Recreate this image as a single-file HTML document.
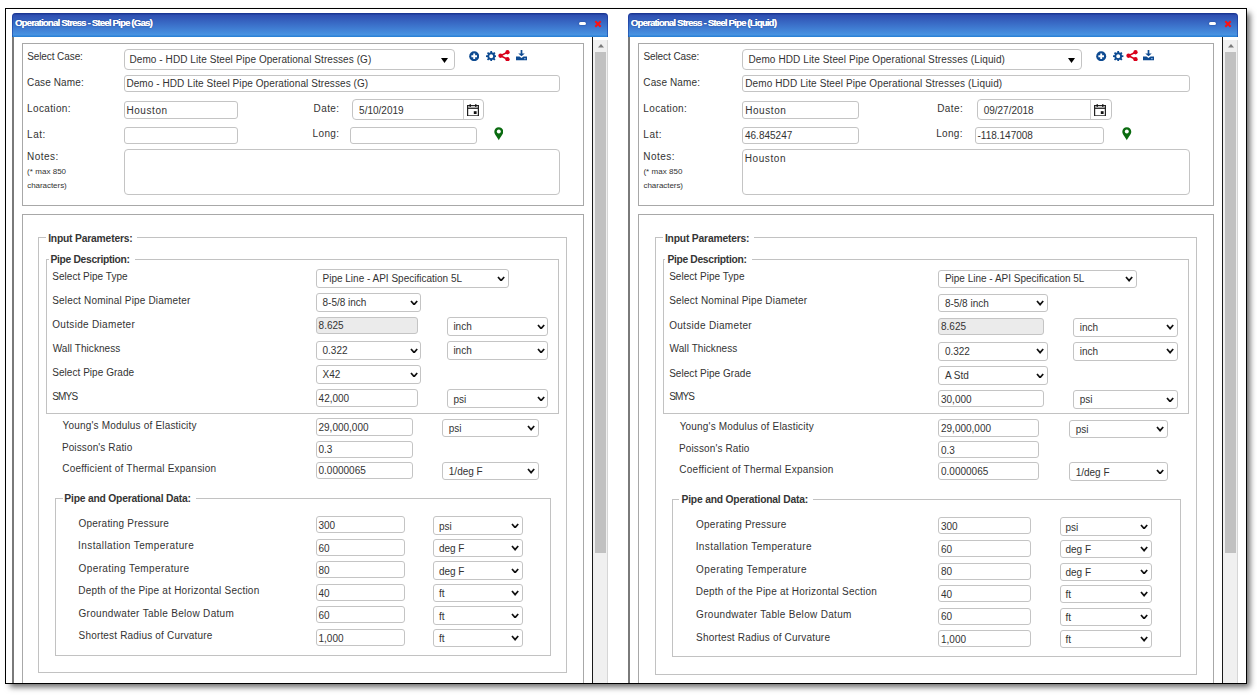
<!DOCTYPE html><html><head><meta charset="utf-8"><style>html,body{margin:0;padding:0;background:#fff;}body{width:1257px;height:695px;position:relative;overflow:hidden;font-family:"Liberation Sans", sans-serif;}</style></head><body>
<div style="position:absolute;left:5px;top:8px;width:1242px;height:676px;box-sizing:border-box;border:1px solid #000;box-shadow:4px 4px 6px -1px rgba(0,0,0,0.6);background:#fff;"></div>
<div style="position:absolute;left:0;top:0;width:1257px;height:683px;overflow:hidden;">
<div style="position:absolute;left:12px;top:13px;width:596px;height:24px;box-sizing:border-box;border-radius:4px 4px 0 0;background:linear-gradient(#15308c 0px,#2f50b2 2.5px,#4893e2 22px,#2c82d6 23px,#2c82d6 24px);box-shadow:inset 1px 0 0 rgba(10,40,140,0.45),inset -1px 0 0 rgba(10,40,140,0.45);"></div>
<div style="position:absolute;left:14.92px;top:16.91px;font-size:9.6px;line-height:11.03px;font-weight:700;color:#fff;white-space:pre;letter-spacing:-0.810px;text-shadow:0.25px 0 0 rgba(255,255,255,0.8),0 0 1.5px rgba(0,10,80,0.5);">Operational Stress - Steel Pipe (Gas)</div>
<div style="position:absolute;left:578.7px;top:22px;width:7.6px;height:3px;box-sizing:border-box;background:#fff;border-radius:1.5px;box-shadow:0 0 1.5px #0d2f7a;"></div>
<svg style="position:absolute;left:594px;top:19.7px" width="8" height="8"><path d="M1.3,1.3 L6.7,6.7 M6.7,1.3 L1.3,6.7" stroke="#ff1010" stroke-width="2"/></svg>
<div style="position:absolute;left:12px;top:37px;width:2px;height:647px;box-sizing:border-box;background:#7a7a7a;"></div>
<div style="position:absolute;left:592px;top:37px;width:1px;height:647px;box-sizing:border-box;background:#1a1a1a;"></div>
<div style="position:absolute;left:593px;top:39.5px;width:15px;height:644.5px;box-sizing:border-box;background:#f0f0f0;border-right:1px solid #d6d6d6;"></div>
<svg style="position:absolute;left:597.5px;top:43.6px" width="6" height="4"><path d="M0,3.6 L3,0 L6,3.6 Z" fill="#7a7a7a"/></svg>
<div style="position:absolute;left:594.5px;top:52px;width:11px;height:501px;box-sizing:border-box;background:#c1c1c1;"></div>
<div style="position:absolute;left:22px;top:43px;width:562px;height:163px;box-sizing:border-box;border:1px solid #a8a8a8;"></div>
<div style="position:absolute;left:27.15px;top:50.65px;font-size:10px;line-height:11.49px;font-weight:400;color:#333;white-space:pre;letter-spacing:-0.086px;">Select Case:</div>
<div style="position:absolute;left:27.1px;top:76.55px;font-size:10px;line-height:11.49px;font-weight:400;color:#333;white-space:pre;letter-spacing:0.111px;">Case Name:</div>
<div style="position:absolute;left:27.1px;top:102.95px;font-size:10px;line-height:11.49px;font-weight:400;color:#333;white-space:pre;letter-spacing:0.350px;">Location:</div>
<div style="position:absolute;left:27.1px;top:128.85px;font-size:10px;line-height:11.49px;font-weight:400;color:#333;white-space:pre;letter-spacing:0.533px;">Lat:</div>
<div style="position:absolute;left:27.1px;top:150.95px;font-size:10px;line-height:11.49px;font-weight:400;color:#333;white-space:pre;letter-spacing:0.460px;">Notes:</div>
<div style="position:absolute;left:27.12px;top:166.56px;font-size:8px;line-height:9.19px;font-weight:400;color:#333;white-space:pre;letter-spacing:0.031px;">(* max 850</div>
<div style="position:absolute;left:27.28px;top:180.56px;font-size:8px;line-height:9.19px;font-weight:400;color:#333;white-space:pre;letter-spacing:-0.054px;">characters)</div>
<div style="position:absolute;left:124px;top:49px;width:330.5px;height:20.5px;box-sizing:border-box;border:1px solid #c4c4c4;border-radius:4px;background:#fff;"></div>
<div style="position:absolute;left:129.5px;top:54.15px;font-size:10px;line-height:11.49px;font-weight:400;color:#333;white-space:pre;letter-spacing:0.078px;">Demo - HDD Lite Steel Pipe Operational Stresses (G)</div>
<svg style="position:absolute;left:440.5px;top:58px" width="7" height="5"><path d="M0,0 L7,0 L3.5,5 Z" fill="#000"/></svg>
<svg style="position:absolute;left:468.8px;top:50.8px" width="10.4" height="10.4" viewBox="0 0 20 20"><circle cx="10" cy="10" r="9.6" fill="#0d4a91"/><path d="M10,4.6 V15.4 M4.6,10 H15.4" stroke="#fff" stroke-width="3.6"/></svg>
<svg style="position:absolute;left:485.8px;top:50.8px" width="10.4" height="10.4" viewBox="0 0 20 20"><rect x="8.3" y="0" width="3.4" height="5" fill="#0d4a91" transform="rotate(0 10 10)"/><rect x="8.3" y="0" width="3.4" height="5" fill="#0d4a91" transform="rotate(45 10 10)"/><rect x="8.3" y="0" width="3.4" height="5" fill="#0d4a91" transform="rotate(90 10 10)"/><rect x="8.3" y="0" width="3.4" height="5" fill="#0d4a91" transform="rotate(135 10 10)"/><rect x="8.3" y="0" width="3.4" height="5" fill="#0d4a91" transform="rotate(180 10 10)"/><rect x="8.3" y="0" width="3.4" height="5" fill="#0d4a91" transform="rotate(225 10 10)"/><rect x="8.3" y="0" width="3.4" height="5" fill="#0d4a91" transform="rotate(270 10 10)"/><rect x="8.3" y="0" width="3.4" height="5" fill="#0d4a91" transform="rotate(315 10 10)"/><circle cx="10" cy="10" r="5.6" fill="none" stroke="#0d4a91" stroke-width="3.6"/></svg>
<svg style="position:absolute;left:498px;top:49.6px" width="12" height="11.5" viewBox="0 0 24 23"><path d="M19,4.5 L5,11.5 L19,18.5" fill="none" stroke="#d9001b" stroke-width="3.2"/><circle cx="19" cy="4.5" r="4.3" fill="#d9001b"/><circle cx="5" cy="11.5" r="4.3" fill="#d9001b"/><circle cx="19" cy="18.5" r="4.3" fill="#d9001b"/></svg>
<svg style="position:absolute;left:515.5px;top:50.4px" width="11" height="10.5" viewBox="0 0 22 21"><path d="M11,0 V8" stroke="#0d4a91" stroke-width="3.4"/><path d="M4.5,6.8 L17.5,6.8 L11,12.6 Z" fill="#0d4a91"/><path d="M0,13 H7 L11,16.2 L15,13 H22 V20.4 H0 Z" fill="#0d4a91"/><rect x="16" y="16" width="3.5" height="2.5" fill="#7aa3d6"/></svg>
<div style="position:absolute;left:124px;top:75px;width:436.2px;height:16.5px;box-sizing:border-box;border:1px solid #c4c4c4;border-radius:3px;background:#fff;"></div>
<div style="position:absolute;left:126.4px;top:77.95px;font-size:10px;line-height:11.49px;font-weight:400;color:#333;white-space:pre;letter-spacing:0.078px;">Demo - HDD Lite Steel Pipe Operational Stresses (G)</div>
<div style="position:absolute;left:124px;top:101.3px;width:113.5px;height:17.7px;box-sizing:border-box;border:1px solid #c4c4c4;border-radius:3px;background:#fff;"></div>
<div style="position:absolute;left:126.4px;top:104.85px;font-size:10px;line-height:11.49px;font-weight:400;color:#333;white-space:pre;letter-spacing:0.575px;">Houston</div>
<div style="position:absolute;left:313.6px;top:103.15px;font-size:10px;line-height:11.49px;font-weight:400;color:#333;white-space:pre;letter-spacing:0.400px;">Date:</div>
<div style="position:absolute;left:352.4px;top:99.2px;width:131.3px;height:20.6px;box-sizing:border-box;border:1px solid #c4c4c4;border-radius:4px;background:#fff;"></div>
<div style="position:absolute;left:462.6px;top:100px;width:1px;height:19px;box-sizing:border-box;background:#cfcfcf;"></div>
<div style="position:absolute;left:359.1px;top:104.65px;font-size:10px;line-height:11.49px;font-weight:400;color:#333;white-space:pre;">5/10/2019</div>
<svg style="position:absolute;left:467px;top:103.5px" width="12" height="12.5" viewBox="0 0 12 12.5"><rect x="0.6" y="1.6" width="10.8" height="10.3" fill="none" stroke="#222" stroke-width="1.2"/><rect x="0" y="3.6" width="12" height="1.3" fill="#222"/><rect x="2.5" y="0.3" width="1.5" height="2.5" fill="#111"/><rect x="8" y="0.3" width="1.5" height="2.5" fill="#111"/><rect x="6.8" y="7.2" width="2.8" height="2.8" fill="#111"/></svg>
<div style="position:absolute;left:124px;top:127px;width:113.5px;height:17px;box-sizing:border-box;border:1px solid #c4c4c4;border-radius:3px;background:#fff;"></div>
<div style="position:absolute;left:312.6px;top:128.45px;font-size:10px;line-height:11.49px;font-weight:400;color:#333;white-space:pre;letter-spacing:0.337px;">Long:</div>
<div style="position:absolute;left:350.4px;top:127px;width:126.2px;height:16.8px;box-sizing:border-box;border:1px solid #c4c4c4;border-radius:3px;background:#fff;"></div>
<svg style="position:absolute;left:493.7px;top:127.2px" width="9.6" height="13.4" viewBox="0 0 12 17"><path d="M6,0.3 C9.3,0.3 11.7,2.8 11.7,5.9 C11.7,9.3 8,12.5 6,16.8 C4,12.5 0.3,9.3 0.3,5.9 C0.3,2.8 2.7,0.3 6,0.3 Z" fill="#0a6b10"/><circle cx="6" cy="5.8" r="2.5" fill="#fff"/></svg>
<div style="position:absolute;left:124px;top:149.3px;width:436.2px;height:45.5px;box-sizing:border-box;border:1px solid #c4c4c4;border-radius:4px;background:#fff;"></div>
<div style="position:absolute;left:22px;top:214px;width:562px;height:486px;box-sizing:border-box;border:1px solid #a8a8a8;"></div>
<div style="position:absolute;left:38px;top:237px;width:529px;height:436px;box-sizing:border-box;border:1px solid #c2c2c2;"></div>
<div style="position:absolute;left:46.3px;top:236px;width:91.2px;height:2.2px;box-sizing:border-box;background:#fff;"></div>
<div style="position:absolute;left:48.13px;top:232.58px;font-size:10.3px;line-height:11.83px;font-weight:700;color:#353535;white-space:pre;letter-spacing:-0.185px;">Input Parameters:</div>
<div style="position:absolute;left:46.3px;top:259px;width:512.7px;height:154.5px;box-sizing:border-box;border:1px solid #c2c2c2;"></div>
<div style="position:absolute;left:48.7px;top:258px;width:86.3px;height:2.2px;box-sizing:border-box;background:#fff;"></div>
<div style="position:absolute;left:50.53px;top:254.08px;font-size:10.3px;line-height:11.83px;font-weight:700;color:#353535;white-space:pre;letter-spacing:-0.329px;">Pipe Description:</div>
<div style="position:absolute;left:55px;top:498px;width:496px;height:158px;box-sizing:border-box;border:1px solid #c2c2c2;"></div>
<div style="position:absolute;left:62.5px;top:497px;width:133.5px;height:2.2px;box-sizing:border-box;background:#fff;"></div>
<div style="position:absolute;left:64.33px;top:493.08px;font-size:10.3px;line-height:11.83px;font-weight:700;color:#353535;white-space:pre;letter-spacing:-0.201px;">Pipe and Operational Data:</div>
<div style="position:absolute;left:52.25px;top:271.05px;font-size:10px;line-height:11.49px;font-weight:400;color:#333;white-space:pre;letter-spacing:0.033px;">Select Pipe Type</div>
<div style="position:absolute;left:52.25px;top:294.85px;font-size:10px;line-height:11.49px;font-weight:400;color:#333;white-space:pre;letter-spacing:0.170px;">Select Nominal Pipe Diameter</div>
<div style="position:absolute;left:52.25px;top:319.05px;font-size:10px;line-height:11.49px;font-weight:400;color:#333;white-space:pre;letter-spacing:0.317px;">Outside Diameter</div>
<div style="position:absolute;left:52.7px;top:342.65px;font-size:10px;line-height:11.49px;font-weight:400;color:#333;white-space:pre;letter-spacing:0.073px;">Wall Thickness</div>
<div style="position:absolute;left:52.25px;top:366.85px;font-size:10px;line-height:11.49px;font-weight:400;color:#333;white-space:pre;letter-spacing:0.044px;">Select Pipe Grade</div>
<div style="position:absolute;left:52.25px;top:390.55px;font-size:10px;line-height:11.49px;font-weight:400;color:#333;white-space:pre;letter-spacing:-0.817px;">SMYS</div>
<div style="position:absolute;left:316px;top:269.4px;width:192.8px;height:18.2px;box-sizing:border-box;border:1px solid #c4c4c4;border-radius:3px;background:#fff;"></div>
<div style="position:absolute;left:322.5px;top:273.05px;font-size:10px;line-height:11.49px;font-weight:400;color:#333;white-space:pre;">Pipe Line - API Specification 5L</div>
<svg style="position:absolute;left:496.9px;top:275.6px" width="8.2" height="5.6"><polyline points="1,1 4.1,4.6 7.2,1" fill="none" stroke="#111" stroke-width="1.7" stroke-linejoin="miter"/></svg>
<div style="position:absolute;left:316px;top:293.4px;width:105.4px;height:18.2px;box-sizing:border-box;border:1px solid #c4c4c4;border-radius:3px;background:#fff;"></div>
<div style="position:absolute;left:322.5px;top:297.05px;font-size:10px;line-height:11.49px;font-weight:400;color:#333;white-space:pre;">8-5/8 inch</div>
<svg style="position:absolute;left:409.5px;top:299.6px" width="8.2" height="5.6"><polyline points="1,1 4.1,4.6 7.2,1" fill="none" stroke="#111" stroke-width="1.7" stroke-linejoin="miter"/></svg>
<div style="position:absolute;left:316px;top:317.3px;width:101.5px;height:16.7px;box-sizing:border-box;border:1px solid #c4c4c4;border-radius:3px;background:#ebebeb;"></div>
<div style="position:absolute;left:318.6px;top:320.35px;font-size:10px;line-height:11.49px;font-weight:400;color:#333;white-space:pre;">8.625</div>
<div style="position:absolute;left:446.9px;top:317.3px;width:101.6px;height:18.7px;box-sizing:border-box;border:1px solid #c4c4c4;border-radius:3px;background:#fff;"></div>
<div style="position:absolute;left:453.4px;top:321.2px;font-size:10px;line-height:11.49px;font-weight:400;color:#333;white-space:pre;">inch</div>
<svg style="position:absolute;left:536.6px;top:323.75px" width="8.2" height="5.6"><polyline points="1,1 4.1,4.6 7.2,1" fill="none" stroke="#111" stroke-width="1.7" stroke-linejoin="miter"/></svg>
<div style="position:absolute;left:316px;top:341.4px;width:105.4px;height:18.5px;box-sizing:border-box;border:1px solid #c4c4c4;border-radius:3px;background:#fff;"></div>
<div style="position:absolute;left:322.5px;top:345.2px;font-size:10px;line-height:11.49px;font-weight:400;color:#333;white-space:pre;">0.322</div>
<svg style="position:absolute;left:409.5px;top:347.75px" width="8.2" height="5.6"><polyline points="1,1 4.1,4.6 7.2,1" fill="none" stroke="#111" stroke-width="1.7" stroke-linejoin="miter"/></svg>
<div style="position:absolute;left:446.9px;top:341.4px;width:101.6px;height:18.6px;box-sizing:border-box;border:1px solid #c4c4c4;border-radius:3px;background:#fff;"></div>
<div style="position:absolute;left:453.4px;top:345.25px;font-size:10px;line-height:11.49px;font-weight:400;color:#333;white-space:pre;">inch</div>
<svg style="position:absolute;left:536.6px;top:347.8px" width="8.2" height="5.6"><polyline points="1,1 4.1,4.6 7.2,1" fill="none" stroke="#111" stroke-width="1.7" stroke-linejoin="miter"/></svg>
<div style="position:absolute;left:316px;top:365.3px;width:105.4px;height:18.9px;box-sizing:border-box;border:1px solid #c4c4c4;border-radius:3px;background:#fff;"></div>
<div style="position:absolute;left:322.5px;top:369.3px;font-size:10px;line-height:11.49px;font-weight:400;color:#333;white-space:pre;">X42</div>
<svg style="position:absolute;left:409.5px;top:371.85px" width="8.2" height="5.6"><polyline points="1,1 4.1,4.6 7.2,1" fill="none" stroke="#111" stroke-width="1.7" stroke-linejoin="miter"/></svg>
<div style="position:absolute;left:316px;top:389.4px;width:101.5px;height:17.2px;box-sizing:border-box;border:1px solid #c4c4c4;border-radius:3px;background:#fff;"></div>
<div style="position:absolute;left:318.6px;top:392.85px;font-size:10px;line-height:11.49px;font-weight:400;color:#333;white-space:pre;">42,000</div>
<div style="position:absolute;left:446.9px;top:389.4px;width:101.6px;height:18.6px;box-sizing:border-box;border:1px solid #c4c4c4;border-radius:3px;background:#fff;"></div>
<div style="position:absolute;left:453.4px;top:393.55px;font-size:10px;line-height:11.49px;font-weight:400;color:#333;white-space:pre;">psi</div>
<svg style="position:absolute;left:536.6px;top:395.8px" width="8.2" height="5.6"><polyline points="1,1 4.1,4.6 7.2,1" fill="none" stroke="#111" stroke-width="1.7" stroke-linejoin="miter"/></svg>
<div style="position:absolute;left:62.5px;top:420.25px;font-size:10px;line-height:11.49px;font-weight:400;color:#333;white-space:pre;letter-spacing:0.184px;">Young's Modulus of Elasticity</div>
<div style="position:absolute;left:61.9px;top:442.15px;font-size:10px;line-height:11.49px;font-weight:400;color:#333;white-space:pre;letter-spacing:0.121px;">Poisson's Ratio</div>
<div style="position:absolute;left:62.2px;top:462.65px;font-size:10px;line-height:11.49px;font-weight:400;color:#333;white-space:pre;letter-spacing:0.227px;">Coefficient of Thermal Expansion</div>
<div style="position:absolute;left:315.9px;top:418.2px;width:97.1px;height:17.6px;box-sizing:border-box;border:1px solid #c4c4c4;border-radius:3px;background:#fff;"></div>
<div style="position:absolute;left:318.5px;top:421.75px;font-size:10px;line-height:11.49px;font-weight:400;color:#333;white-space:pre;">29,000,000</div>
<div style="position:absolute;left:442.3px;top:419.2px;width:96.3px;height:18px;box-sizing:border-box;border:1px solid #c4c4c4;border-radius:3px;background:#fff;"></div>
<div style="position:absolute;left:448.8px;top:423.25px;font-size:10px;line-height:11.49px;font-weight:400;color:#333;white-space:pre;">psi</div>
<svg style="position:absolute;left:526.7px;top:425.3px" width="8.2" height="5.6"><polyline points="1,1 4.1,4.6 7.2,1" fill="none" stroke="#111" stroke-width="1.7" stroke-linejoin="miter"/></svg>
<div style="position:absolute;left:315.9px;top:440.6px;width:97.1px;height:17px;box-sizing:border-box;border:1px solid #c4c4c4;border-radius:3px;background:#fff;"></div>
<div style="position:absolute;left:318.5px;top:443.95px;font-size:10px;line-height:11.49px;font-weight:400;color:#333;white-space:pre;">0.3</div>
<div style="position:absolute;left:315.9px;top:461.5px;width:97.1px;height:17.5px;box-sizing:border-box;border:1px solid #c4c4c4;border-radius:3px;background:#fff;"></div>
<div style="position:absolute;left:318.5px;top:464.75px;font-size:10px;line-height:11.49px;font-weight:400;color:#333;white-space:pre;">0.0000065</div>
<div style="position:absolute;left:442.3px;top:461.5px;width:96.3px;height:18.7px;box-sizing:border-box;border:1px solid #c4c4c4;border-radius:3px;background:#fff;"></div>
<div style="position:absolute;left:448.8px;top:465.7px;font-size:10px;line-height:11.49px;font-weight:400;color:#333;white-space:pre;">1/deg F</div>
<svg style="position:absolute;left:526.7px;top:467.95px" width="8.2" height="5.6"><polyline points="1,1 4.1,4.6 7.2,1" fill="none" stroke="#111" stroke-width="1.7" stroke-linejoin="miter"/></svg>
<div style="position:absolute;left:78.55px;top:517.85px;font-size:10px;line-height:11.49px;font-weight:400;color:#333;white-space:pre;letter-spacing:0.209px;">Operating Pressure</div>
<div style="position:absolute;left:315.9px;top:516.4px;width:88.8px;height:17px;box-sizing:border-box;border:1px solid #c4c4c4;border-radius:3px;background:#fff;"></div>
<div style="position:absolute;left:318.5px;top:520.25px;font-size:10px;line-height:11.49px;font-weight:400;color:#333;white-space:pre;">300</div>
<div style="position:absolute;left:433.4px;top:516.4px;width:89.4px;height:18.2px;box-sizing:border-box;border:1px solid #c4c4c4;border-radius:3px;background:#fff;"></div>
<div style="position:absolute;left:438.9px;top:520.65px;font-size:10px;line-height:11.49px;font-weight:400;color:#333;white-space:pre;">psi</div>
<svg style="position:absolute;left:510.9px;top:522.6px" width="8.2" height="5.6"><polyline points="1,1 4.1,4.6 7.2,1" fill="none" stroke="#111" stroke-width="1.7" stroke-linejoin="miter"/></svg>
<div style="position:absolute;left:78.1px;top:540.31px;font-size:10px;line-height:11.49px;font-weight:400;color:#333;white-space:pre;letter-spacing:0.402px;">Installation Temperature</div>
<div style="position:absolute;left:315.9px;top:538.88px;width:88.8px;height:17px;box-sizing:border-box;border:1px solid #c4c4c4;border-radius:3px;background:#fff;"></div>
<div style="position:absolute;left:318.5px;top:542.73px;font-size:10px;line-height:11.49px;font-weight:400;color:#333;white-space:pre;">60</div>
<div style="position:absolute;left:433.4px;top:538.88px;width:89.4px;height:18.2px;box-sizing:border-box;border:1px solid #c4c4c4;border-radius:3px;background:#fff;"></div>
<div style="position:absolute;left:438.9px;top:543.13px;font-size:10px;line-height:11.49px;font-weight:400;color:#333;white-space:pre;">deg F</div>
<svg style="position:absolute;left:510.9px;top:545.08px" width="8.2" height="5.6"><polyline points="1,1 4.1,4.6 7.2,1" fill="none" stroke="#111" stroke-width="1.7" stroke-linejoin="miter"/></svg>
<div style="position:absolute;left:78.55px;top:562.77px;font-size:10px;line-height:11.49px;font-weight:400;color:#333;white-space:pre;letter-spacing:0.395px;">Operating Temperature</div>
<div style="position:absolute;left:315.9px;top:561.36px;width:88.8px;height:17px;box-sizing:border-box;border:1px solid #c4c4c4;border-radius:3px;background:#fff;"></div>
<div style="position:absolute;left:318.5px;top:565.21px;font-size:10px;line-height:11.49px;font-weight:400;color:#333;white-space:pre;">80</div>
<div style="position:absolute;left:433.4px;top:561.36px;width:89.4px;height:18.2px;box-sizing:border-box;border:1px solid #c4c4c4;border-radius:3px;background:#fff;"></div>
<div style="position:absolute;left:438.9px;top:565.61px;font-size:10px;line-height:11.49px;font-weight:400;color:#333;white-space:pre;">deg F</div>
<svg style="position:absolute;left:510.9px;top:567.56px" width="8.2" height="5.6"><polyline points="1,1 4.1,4.6 7.2,1" fill="none" stroke="#111" stroke-width="1.7" stroke-linejoin="miter"/></svg>
<div style="position:absolute;left:78.2px;top:585.23px;font-size:10px;line-height:11.49px;font-weight:400;color:#333;white-space:pre;letter-spacing:0.229px;">Depth of the Pipe at Horizontal Section</div>
<div style="position:absolute;left:315.9px;top:583.84px;width:88.8px;height:17px;box-sizing:border-box;border:1px solid #c4c4c4;border-radius:3px;background:#fff;"></div>
<div style="position:absolute;left:318.5px;top:587.69px;font-size:10px;line-height:11.49px;font-weight:400;color:#333;white-space:pre;">40</div>
<div style="position:absolute;left:433.4px;top:583.84px;width:89.4px;height:18.2px;box-sizing:border-box;border:1px solid #c4c4c4;border-radius:3px;background:#fff;"></div>
<div style="position:absolute;left:438.9px;top:588.09px;font-size:10px;line-height:11.49px;font-weight:400;color:#333;white-space:pre;">ft</div>
<svg style="position:absolute;left:510.9px;top:590.04px" width="8.2" height="5.6"><polyline points="1,1 4.1,4.6 7.2,1" fill="none" stroke="#111" stroke-width="1.7" stroke-linejoin="miter"/></svg>
<div style="position:absolute;left:78.5px;top:607.69px;font-size:10px;line-height:11.49px;font-weight:400;color:#333;white-space:pre;letter-spacing:0.312px;">Groundwater Table Below Datum</div>
<div style="position:absolute;left:315.9px;top:606.32px;width:88.8px;height:17px;box-sizing:border-box;border:1px solid #c4c4c4;border-radius:3px;background:#fff;"></div>
<div style="position:absolute;left:318.5px;top:610.17px;font-size:10px;line-height:11.49px;font-weight:400;color:#333;white-space:pre;">60</div>
<div style="position:absolute;left:433.4px;top:606.32px;width:89.4px;height:18.2px;box-sizing:border-box;border:1px solid #c4c4c4;border-radius:3px;background:#fff;"></div>
<div style="position:absolute;left:438.9px;top:610.57px;font-size:10px;line-height:11.49px;font-weight:400;color:#333;white-space:pre;">ft</div>
<svg style="position:absolute;left:510.9px;top:612.52px" width="8.2" height="5.6"><polyline points="1,1 4.1,4.6 7.2,1" fill="none" stroke="#111" stroke-width="1.7" stroke-linejoin="miter"/></svg>
<div style="position:absolute;left:78.55px;top:630.15px;font-size:10px;line-height:11.49px;font-weight:400;color:#333;white-space:pre;letter-spacing:0.181px;">Shortest Radius of Curvature</div>
<div style="position:absolute;left:315.9px;top:628.8px;width:88.8px;height:17px;box-sizing:border-box;border:1px solid #c4c4c4;border-radius:3px;background:#fff;"></div>
<div style="position:absolute;left:318.5px;top:632.65px;font-size:10px;line-height:11.49px;font-weight:400;color:#333;white-space:pre;">1,000</div>
<div style="position:absolute;left:433.4px;top:628.8px;width:89.4px;height:18.2px;box-sizing:border-box;border:1px solid #c4c4c4;border-radius:3px;background:#fff;"></div>
<div style="position:absolute;left:438.9px;top:633.05px;font-size:10px;line-height:11.49px;font-weight:400;color:#333;white-space:pre;">ft</div>
<svg style="position:absolute;left:510.9px;top:635px" width="8.2" height="5.6"><polyline points="1,1 4.1,4.6 7.2,1" fill="none" stroke="#111" stroke-width="1.7" stroke-linejoin="miter"/></svg>
<div style="position:absolute;left:627.87px;top:13px;width:610.33px;height:24px;box-sizing:border-box;border-radius:4px 4px 0 0;background:linear-gradient(#15308c 0px,#2f50b2 2.5px,#4893e2 22px,#2c82d6 23px,#2c82d6 24px);box-shadow:inset 1px 0 0 rgba(10,40,140,0.45),inset -1px 0 0 rgba(10,40,140,0.45);"></div>
<div style="position:absolute;left:630.78px;top:16.91px;font-size:9.6px;line-height:11.03px;font-weight:700;color:#fff;white-space:pre;letter-spacing:-0.806px;text-shadow:0.25px 0 0 rgba(255,255,255,0.8),0 0 1.5px rgba(0,10,80,0.5);">Operational Stress - Steel Pipe (Liquid)</div>
<div style="position:absolute;left:1208.9px;top:22px;width:7.6px;height:3px;box-sizing:border-box;background:#fff;border-radius:1.5px;box-shadow:0 0 1.5px #0d2f7a;"></div>
<svg style="position:absolute;left:1224.2px;top:19.7px" width="8" height="8"><path d="M1.3,1.3 L6.7,6.7 M6.7,1.3 L1.3,6.7" stroke="#ff1010" stroke-width="2"/></svg>
<div style="position:absolute;left:627.87px;top:37px;width:2px;height:647px;box-sizing:border-box;background:#7a7a7a;"></div>
<div style="position:absolute;left:1222px;top:37px;width:1px;height:647px;box-sizing:border-box;background:#1a1a1a;"></div>
<div style="position:absolute;left:1223px;top:39.5px;width:15px;height:644.5px;box-sizing:border-box;background:#f0f0f0;border-right:1px solid #d6d6d6;"></div>
<svg style="position:absolute;left:1227.6px;top:43.6px" width="6" height="4"><path d="M0,3.6 L3,0 L6,3.6 Z" fill="#7a7a7a"/></svg>
<div style="position:absolute;left:1224.5px;top:52px;width:11px;height:501px;box-sizing:border-box;background:#c1c1c1;"></div>
<div style="position:absolute;left:638.12px;top:43px;width:576.32px;height:163.26px;box-sizing:border-box;border:1px solid #a8a8a8;"></div>
<div style="position:absolute;left:643.41px;top:50.65px;font-size:10px;line-height:11.49px;font-weight:400;color:#333;white-space:pre;letter-spacing:-0.086px;">Select Case:</div>
<div style="position:absolute;left:643.36px;top:76.55px;font-size:10px;line-height:11.49px;font-weight:400;color:#333;white-space:pre;letter-spacing:0.111px;">Case Name:</div>
<div style="position:absolute;left:643.37px;top:102.95px;font-size:10px;line-height:11.49px;font-weight:400;color:#333;white-space:pre;letter-spacing:0.350px;">Location:</div>
<div style="position:absolute;left:643.37px;top:128.85px;font-size:10px;line-height:11.49px;font-weight:400;color:#333;white-space:pre;letter-spacing:0.533px;">Lat:</div>
<div style="position:absolute;left:643.37px;top:150.95px;font-size:10px;line-height:11.49px;font-weight:400;color:#333;white-space:pre;letter-spacing:0.460px;">Notes:</div>
<div style="position:absolute;left:643.38px;top:166.56px;font-size:8px;line-height:9.19px;font-weight:400;color:#333;white-space:pre;letter-spacing:0.031px;">(* max 850</div>
<div style="position:absolute;left:643.54px;top:180.56px;font-size:8px;line-height:9.19px;font-weight:400;color:#333;white-space:pre;letter-spacing:-0.054px;">characters)</div>
<div style="position:absolute;left:742.4px;top:49px;width:339.24px;height:20.5px;box-sizing:border-box;border:1px solid #c4c4c4;border-radius:4px;background:#fff;"></div>
<div style="position:absolute;left:748.38px;top:54.15px;font-size:10px;line-height:11.49px;font-weight:400;color:#333;white-space:pre;letter-spacing:0.111px;">Demo HDD Lite Steel Pipe Operational Stresses (Liquid)</div>
<svg style="position:absolute;left:1067.64px;top:58px" width="7" height="5"><path d="M0,0 L7,0 L3.5,5 Z" fill="#000"/></svg>
<svg style="position:absolute;left:1096.44px;top:50.8px" width="10.4" height="10.4" viewBox="0 0 20 20"><circle cx="10" cy="10" r="9.6" fill="#0d4a91"/><path d="M10,4.6 V15.4 M4.6,10 H15.4" stroke="#fff" stroke-width="3.6"/></svg>
<svg style="position:absolute;left:1113.44px;top:50.8px" width="10.4" height="10.4" viewBox="0 0 20 20"><rect x="8.3" y="0" width="3.4" height="5" fill="#0d4a91" transform="rotate(0 10 10)"/><rect x="8.3" y="0" width="3.4" height="5" fill="#0d4a91" transform="rotate(45 10 10)"/><rect x="8.3" y="0" width="3.4" height="5" fill="#0d4a91" transform="rotate(90 10 10)"/><rect x="8.3" y="0" width="3.4" height="5" fill="#0d4a91" transform="rotate(135 10 10)"/><rect x="8.3" y="0" width="3.4" height="5" fill="#0d4a91" transform="rotate(180 10 10)"/><rect x="8.3" y="0" width="3.4" height="5" fill="#0d4a91" transform="rotate(225 10 10)"/><rect x="8.3" y="0" width="3.4" height="5" fill="#0d4a91" transform="rotate(270 10 10)"/><rect x="8.3" y="0" width="3.4" height="5" fill="#0d4a91" transform="rotate(315 10 10)"/><circle cx="10" cy="10" r="5.6" fill="none" stroke="#0d4a91" stroke-width="3.6"/></svg>
<svg style="position:absolute;left:1125.64px;top:49.6px" width="12" height="11.5" viewBox="0 0 24 23"><path d="M19,4.5 L5,11.5 L19,18.5" fill="none" stroke="#d9001b" stroke-width="3.2"/><circle cx="19" cy="4.5" r="4.3" fill="#d9001b"/><circle cx="5" cy="11.5" r="4.3" fill="#d9001b"/><circle cx="19" cy="18.5" r="4.3" fill="#d9001b"/></svg>
<svg style="position:absolute;left:1143.14px;top:50.4px" width="11" height="10.5" viewBox="0 0 22 21"><path d="M11,0 V8" stroke="#0d4a91" stroke-width="3.4"/><path d="M4.5,6.8 L17.5,6.8 L11,12.6 Z" fill="#0d4a91"/><path d="M0,13 H7 L11,16.2 L15,13 H22 V20.4 H0 Z" fill="#0d4a91"/><rect x="16" y="16" width="3.5" height="2.5" fill="#7aa3d6"/></svg>
<div style="position:absolute;left:742.4px;top:75px;width:447.63px;height:16.5px;box-sizing:border-box;border:1px solid #c4c4c4;border-radius:3px;background:#fff;"></div>
<div style="position:absolute;left:745.2px;top:77.95px;font-size:10px;line-height:11.49px;font-weight:400;color:#333;white-space:pre;letter-spacing:0.119px;">Demo HDD Lite Steel Pipe Operational Stresses (Liquid)</div>
<div style="position:absolute;left:742.4px;top:101.3px;width:116.71px;height:17.7px;box-sizing:border-box;border:1px solid #c4c4c4;border-radius:3px;background:#fff;"></div>
<div style="position:absolute;left:745.2px;top:104.85px;font-size:10px;line-height:11.49px;font-weight:400;color:#333;white-space:pre;letter-spacing:0.575px;">Houston</div>
<div style="position:absolute;left:937.17px;top:103.15px;font-size:10px;line-height:11.49px;font-weight:400;color:#333;white-space:pre;letter-spacing:0.400px;">Date:</div>
<div style="position:absolute;left:976.94px;top:99.2px;width:134.65px;height:20.6px;box-sizing:border-box;border:1px solid #c4c4c4;border-radius:4px;background:#fff;"></div>
<div style="position:absolute;left:1089.95px;top:100px;width:1px;height:19px;box-sizing:border-box;background:#cfcfcf;"></div>
<div style="position:absolute;left:983.64px;top:104.65px;font-size:10px;line-height:11.49px;font-weight:400;color:#333;white-space:pre;">09/27/2018</div>
<svg style="position:absolute;left:1094.46px;top:103.5px" width="12" height="12.5" viewBox="0 0 12 12.5"><rect x="0.6" y="1.6" width="10.8" height="10.3" fill="none" stroke="#222" stroke-width="1.2"/><rect x="0" y="3.6" width="12" height="1.3" fill="#222"/><rect x="2.5" y="0.3" width="1.5" height="2.5" fill="#111"/><rect x="8" y="0.3" width="1.5" height="2.5" fill="#111"/><rect x="6.8" y="7.2" width="2.8" height="2.8" fill="#111"/></svg>
<div style="position:absolute;left:742.4px;top:127px;width:116.71px;height:17px;box-sizing:border-box;border:1px solid #c4c4c4;border-radius:3px;background:#fff;"></div>
<div style="position:absolute;left:745px;top:130.35px;font-size:10px;line-height:11.49px;font-weight:400;color:#333;white-space:pre;">46.845247</div>
<div style="position:absolute;left:936.15px;top:128.45px;font-size:10px;line-height:11.49px;font-weight:400;color:#333;white-space:pre;letter-spacing:0.337px;">Long:</div>
<div style="position:absolute;left:974.89px;top:127px;width:129.42px;height:16.8px;box-sizing:border-box;border:1px solid #c4c4c4;border-radius:3px;background:#fff;"></div>
<div style="position:absolute;left:977.49px;top:130.35px;font-size:10px;line-height:11.49px;font-weight:400;color:#333;white-space:pre;">-118.147008</div>
<svg style="position:absolute;left:1121.96px;top:127.2px" width="9.6" height="13.4" viewBox="0 0 12 17"><path d="M6,0.3 C9.3,0.3 11.7,2.8 11.7,5.9 C11.7,9.3 8,12.5 6,16.8 C4,12.5 0.3,9.3 0.3,5.9 C0.3,2.8 2.7,0.3 6,0.3 Z" fill="#0a6b10"/><circle cx="6" cy="5.8" r="2.5" fill="#fff"/></svg>
<div style="position:absolute;left:742.4px;top:149.3px;width:447.63px;height:45.5px;box-sizing:border-box;border:1px solid #c4c4c4;border-radius:4px;background:#fff;"></div>
<div style="position:absolute;left:744.8px;top:152.55px;font-size:10px;line-height:11.49px;font-weight:400;color:#333;white-space:pre;letter-spacing:0.575px;">Houston</div>
<div style="position:absolute;left:638.12px;top:214.28px;width:576.32px;height:485.72px;box-sizing:border-box;border:1px solid #a8a8a8;"></div>
<div style="position:absolute;left:654.53px;top:237.33px;width:542.48px;height:437.8px;box-sizing:border-box;border:1px solid #c2c2c2;"></div>
<div style="position:absolute;left:662.83px;top:236.33px;width:91.2px;height:2.2px;box-sizing:border-box;background:#fff;"></div>
<div style="position:absolute;left:664.93px;top:232.91px;font-size:10.3px;line-height:11.83px;font-weight:700;color:#353535;white-space:pre;letter-spacing:-0.185px;">Input Parameters:</div>
<div style="position:absolute;left:663.04px;top:259.39px;width:525.76px;height:154.89px;box-sizing:border-box;border:1px solid #c2c2c2;"></div>
<div style="position:absolute;left:665.44px;top:258.39px;width:86.3px;height:2.2px;box-sizing:border-box;background:#fff;"></div>
<div style="position:absolute;left:667.4px;top:254.47px;font-size:10.3px;line-height:11.83px;font-weight:700;color:#353535;white-space:pre;letter-spacing:-0.329px;">Pipe Description:</div>
<div style="position:absolute;left:671.96px;top:498.99px;width:508.64px;height:158.4px;box-sizing:border-box;border:1px solid #c2c2c2;"></div>
<div style="position:absolute;left:679.46px;top:497.99px;width:133.5px;height:2.2px;box-sizing:border-box;background:#fff;"></div>
<div style="position:absolute;left:681.55px;top:494.07px;font-size:10.3px;line-height:11.83px;font-weight:700;color:#353535;white-space:pre;letter-spacing:-0.201px;">Pipe and Operational Data:</div>
<div style="position:absolute;left:669.15px;top:271.49px;font-size:10px;line-height:11.49px;font-weight:400;color:#333;white-space:pre;letter-spacing:0.033px;">Select Pipe Type</div>
<div style="position:absolute;left:669.15px;top:295.35px;font-size:10px;line-height:11.49px;font-weight:400;color:#333;white-space:pre;letter-spacing:0.170px;">Select Nominal Pipe Diameter</div>
<div style="position:absolute;left:669.15px;top:319.61px;font-size:10px;line-height:11.49px;font-weight:400;color:#333;white-space:pre;letter-spacing:0.317px;">Outside Diameter</div>
<div style="position:absolute;left:669.6px;top:343.27px;font-size:10px;line-height:11.49px;font-weight:400;color:#333;white-space:pre;letter-spacing:0.073px;">Wall Thickness</div>
<div style="position:absolute;left:669.15px;top:367.53px;font-size:10px;line-height:11.49px;font-weight:400;color:#333;white-space:pre;letter-spacing:0.044px;">Select Pipe Grade</div>
<div style="position:absolute;left:669.15px;top:391.29px;font-size:10px;line-height:11.49px;font-weight:400;color:#333;white-space:pre;letter-spacing:-0.817px;">SMYS</div>
<div style="position:absolute;left:938.4px;top:269.81px;width:198.92px;height:18.25px;box-sizing:border-box;border:1px solid #c4c4c4;border-radius:3px;background:#fff;"></div>
<div style="position:absolute;left:944.9px;top:273.49px;font-size:10px;line-height:11.49px;font-weight:400;color:#333;white-space:pre;">Pipe Line - API Specification 5L</div>
<svg style="position:absolute;left:1125.42px;top:276.04px" width="8.2" height="5.6"><polyline points="1,1 4.1,4.6 7.2,1" fill="none" stroke="#111" stroke-width="1.7" stroke-linejoin="miter"/></svg>
<div style="position:absolute;left:938.4px;top:293.88px;width:109.3px;height:18.25px;box-sizing:border-box;border:1px solid #c4c4c4;border-radius:3px;background:#fff;"></div>
<div style="position:absolute;left:944.9px;top:297.55px;font-size:10px;line-height:11.49px;font-weight:400;color:#333;white-space:pre;">8-5/8 inch</div>
<svg style="position:absolute;left:1035.8px;top:300.1px" width="8.2" height="5.6"><polyline points="1,1 4.1,4.6 7.2,1" fill="none" stroke="#111" stroke-width="1.7" stroke-linejoin="miter"/></svg>
<div style="position:absolute;left:938.4px;top:317.84px;width:105.3px;height:16.74px;box-sizing:border-box;border:1px solid #c4c4c4;border-radius:3px;background:#ebebeb;"></div>
<div style="position:absolute;left:941px;top:320.89px;font-size:10px;line-height:11.49px;font-weight:400;color:#333;white-space:pre;">8.625</div>
<div style="position:absolute;left:1073.2px;top:317.84px;width:104.84px;height:18.75px;box-sizing:border-box;border:1px solid #c4c4c4;border-radius:3px;background:#fff;"></div>
<div style="position:absolute;left:1079.7px;top:321.76px;font-size:10px;line-height:11.49px;font-weight:400;color:#333;white-space:pre;">inch</div>
<svg style="position:absolute;left:1166.14px;top:324.31px" width="8.2" height="5.6"><polyline points="1,1 4.1,4.6 7.2,1" fill="none" stroke="#111" stroke-width="1.7" stroke-linejoin="miter"/></svg>
<div style="position:absolute;left:938.4px;top:342px;width:109.3px;height:18.55px;box-sizing:border-box;border:1px solid #c4c4c4;border-radius:3px;background:#fff;"></div>
<div style="position:absolute;left:944.9px;top:345.82px;font-size:10px;line-height:11.49px;font-weight:400;color:#333;white-space:pre;">0.322</div>
<svg style="position:absolute;left:1035.8px;top:348.37px" width="8.2" height="5.6"><polyline points="1,1 4.1,4.6 7.2,1" fill="none" stroke="#111" stroke-width="1.7" stroke-linejoin="miter"/></svg>
<div style="position:absolute;left:1073.2px;top:342px;width:104.84px;height:18.65px;box-sizing:border-box;border:1px solid #c4c4c4;border-radius:3px;background:#fff;"></div>
<div style="position:absolute;left:1079.7px;top:345.87px;font-size:10px;line-height:11.49px;font-weight:400;color:#333;white-space:pre;">inch</div>
<svg style="position:absolute;left:1166.14px;top:348.42px" width="8.2" height="5.6"><polyline points="1,1 4.1,4.6 7.2,1" fill="none" stroke="#111" stroke-width="1.7" stroke-linejoin="miter"/></svg>
<div style="position:absolute;left:938.4px;top:365.96px;width:109.3px;height:18.95px;box-sizing:border-box;border:1px solid #c4c4c4;border-radius:3px;background:#fff;"></div>
<div style="position:absolute;left:944.9px;top:369.98px;font-size:10px;line-height:11.49px;font-weight:400;color:#333;white-space:pre;">A Std</div>
<svg style="position:absolute;left:1035.8px;top:372.53px" width="8.2" height="5.6"><polyline points="1,1 4.1,4.6 7.2,1" fill="none" stroke="#111" stroke-width="1.7" stroke-linejoin="miter"/></svg>
<div style="position:absolute;left:938.4px;top:390.12px;width:105.3px;height:17.24px;box-sizing:border-box;border:1px solid #c4c4c4;border-radius:3px;background:#fff;"></div>
<div style="position:absolute;left:941px;top:393.57px;font-size:10px;line-height:11.49px;font-weight:400;color:#333;white-space:pre;">30,000</div>
<div style="position:absolute;left:1073.2px;top:390.12px;width:104.84px;height:18.65px;box-sizing:border-box;border:1px solid #c4c4c4;border-radius:3px;background:#fff;"></div>
<div style="position:absolute;left:1079.7px;top:394.29px;font-size:10px;line-height:11.49px;font-weight:400;color:#333;white-space:pre;">psi</div>
<svg style="position:absolute;left:1166.14px;top:396.54px" width="8.2" height="5.6"><polyline points="1,1 4.1,4.6 7.2,1" fill="none" stroke="#111" stroke-width="1.7" stroke-linejoin="miter"/></svg>
<div style="position:absolute;left:679.66px;top:421.07px;font-size:10px;line-height:11.49px;font-weight:400;color:#333;white-space:pre;letter-spacing:0.184px;">Young's Modulus of Elasticity</div>
<div style="position:absolute;left:679.06px;top:443.02px;font-size:10px;line-height:11.49px;font-weight:400;color:#333;white-space:pre;letter-spacing:0.121px;">Poisson's Ratio</div>
<div style="position:absolute;left:679.36px;top:463.57px;font-size:10px;line-height:11.49px;font-weight:400;color:#333;white-space:pre;letter-spacing:0.227px;">Coefficient of Thermal Expansion</div>
<div style="position:absolute;left:938.4px;top:418.99px;width:100.68px;height:17.64px;box-sizing:border-box;border:1px solid #c4c4c4;border-radius:3px;background:#fff;"></div>
<div style="position:absolute;left:941px;top:422.54px;font-size:10px;line-height:11.49px;font-weight:400;color:#333;white-space:pre;">29,000,000</div>
<div style="position:absolute;left:1069.13px;top:419.99px;width:98.75px;height:18.05px;box-sizing:border-box;border:1px solid #c4c4c4;border-radius:3px;background:#fff;"></div>
<div style="position:absolute;left:1075.63px;top:424.07px;font-size:10px;line-height:11.49px;font-weight:400;color:#333;white-space:pre;">psi</div>
<svg style="position:absolute;left:1155.98px;top:426.12px" width="8.2" height="5.6"><polyline points="1,1 4.1,4.6 7.2,1" fill="none" stroke="#111" stroke-width="1.7" stroke-linejoin="miter"/></svg>
<div style="position:absolute;left:938.4px;top:441.45px;width:100.68px;height:17.04px;box-sizing:border-box;border:1px solid #c4c4c4;border-radius:3px;background:#fff;"></div>
<div style="position:absolute;left:941px;top:444.8px;font-size:10px;line-height:11.49px;font-weight:400;color:#333;white-space:pre;">0.3</div>
<div style="position:absolute;left:938.4px;top:462.4px;width:100.68px;height:17.54px;box-sizing:border-box;border:1px solid #c4c4c4;border-radius:3px;background:#fff;"></div>
<div style="position:absolute;left:941px;top:465.65px;font-size:10px;line-height:11.49px;font-weight:400;color:#333;white-space:pre;">0.0000065</div>
<div style="position:absolute;left:1069.13px;top:462.4px;width:98.75px;height:18.75px;box-sizing:border-box;border:1px solid #c4c4c4;border-radius:3px;background:#fff;"></div>
<div style="position:absolute;left:1075.63px;top:466.62px;font-size:10px;line-height:11.49px;font-weight:400;color:#333;white-space:pre;">1/deg F</div>
<svg style="position:absolute;left:1155.98px;top:468.87px" width="8.2" height="5.6"><polyline points="1,1 4.1,4.6 7.2,1" fill="none" stroke="#111" stroke-width="1.7" stroke-linejoin="miter"/></svg>
<div style="position:absolute;left:696.12px;top:518.91px;font-size:10px;line-height:11.49px;font-weight:400;color:#333;white-space:pre;letter-spacing:0.209px;">Operating Pressure</div>
<div style="position:absolute;left:938.4px;top:517.44px;width:92.17px;height:17.04px;box-sizing:border-box;border:1px solid #c4c4c4;border-radius:3px;background:#fff;"></div>
<div style="position:absolute;left:941px;top:521.29px;font-size:10px;line-height:11.49px;font-weight:400;color:#333;white-space:pre;">300</div>
<div style="position:absolute;left:1060px;top:517.44px;width:91.68px;height:18.25px;box-sizing:border-box;border:1px solid #c4c4c4;border-radius:3px;background:#fff;"></div>
<div style="position:absolute;left:1065.5px;top:521.71px;font-size:10px;line-height:11.49px;font-weight:400;color:#333;white-space:pre;">psi</div>
<svg style="position:absolute;left:1139.78px;top:523.66px" width="8.2" height="5.6"><polyline points="1,1 4.1,4.6 7.2,1" fill="none" stroke="#111" stroke-width="1.7" stroke-linejoin="miter"/></svg>
<div style="position:absolute;left:695.67px;top:541.43px;font-size:10px;line-height:11.49px;font-weight:400;color:#333;white-space:pre;letter-spacing:0.402px;">Installation Temperature</div>
<div style="position:absolute;left:938.4px;top:539.97px;width:92.17px;height:17.04px;box-sizing:border-box;border:1px solid #c4c4c4;border-radius:3px;background:#fff;"></div>
<div style="position:absolute;left:941px;top:543.82px;font-size:10px;line-height:11.49px;font-weight:400;color:#333;white-space:pre;">60</div>
<div style="position:absolute;left:1060px;top:539.97px;width:91.68px;height:18.25px;box-sizing:border-box;border:1px solid #c4c4c4;border-radius:3px;background:#fff;"></div>
<div style="position:absolute;left:1065.5px;top:544.25px;font-size:10px;line-height:11.49px;font-weight:400;color:#333;white-space:pre;">deg F</div>
<svg style="position:absolute;left:1139.78px;top:546.2px" width="8.2" height="5.6"><polyline points="1,1 4.1,4.6 7.2,1" fill="none" stroke="#111" stroke-width="1.7" stroke-linejoin="miter"/></svg>
<div style="position:absolute;left:696.12px;top:563.95px;font-size:10px;line-height:11.49px;font-weight:400;color:#333;white-space:pre;letter-spacing:0.395px;">Operating Temperature</div>
<div style="position:absolute;left:938.4px;top:562.51px;width:92.17px;height:17.04px;box-sizing:border-box;border:1px solid #c4c4c4;border-radius:3px;background:#fff;"></div>
<div style="position:absolute;left:941px;top:566.36px;font-size:10px;line-height:11.49px;font-weight:400;color:#333;white-space:pre;">80</div>
<div style="position:absolute;left:1060px;top:562.51px;width:91.68px;height:18.25px;box-sizing:border-box;border:1px solid #c4c4c4;border-radius:3px;background:#fff;"></div>
<div style="position:absolute;left:1065.5px;top:566.78px;font-size:10px;line-height:11.49px;font-weight:400;color:#333;white-space:pre;">deg F</div>
<svg style="position:absolute;left:1139.78px;top:568.73px" width="8.2" height="5.6"><polyline points="1,1 4.1,4.6 7.2,1" fill="none" stroke="#111" stroke-width="1.7" stroke-linejoin="miter"/></svg>
<div style="position:absolute;left:695.77px;top:586.46px;font-size:10px;line-height:11.49px;font-weight:400;color:#333;white-space:pre;letter-spacing:0.229px;">Depth of the Pipe at Horizontal Section</div>
<div style="position:absolute;left:938.4px;top:585.05px;width:92.17px;height:17.04px;box-sizing:border-box;border:1px solid #c4c4c4;border-radius:3px;background:#fff;"></div>
<div style="position:absolute;left:941px;top:588.9px;font-size:10px;line-height:11.49px;font-weight:400;color:#333;white-space:pre;">40</div>
<div style="position:absolute;left:1060px;top:585.05px;width:91.68px;height:18.25px;box-sizing:border-box;border:1px solid #c4c4c4;border-radius:3px;background:#fff;"></div>
<div style="position:absolute;left:1065.5px;top:589.32px;font-size:10px;line-height:11.49px;font-weight:400;color:#333;white-space:pre;">ft</div>
<svg style="position:absolute;left:1139.78px;top:591.27px" width="8.2" height="5.6"><polyline points="1,1 4.1,4.6 7.2,1" fill="none" stroke="#111" stroke-width="1.7" stroke-linejoin="miter"/></svg>
<div style="position:absolute;left:696.07px;top:608.98px;font-size:10px;line-height:11.49px;font-weight:400;color:#333;white-space:pre;letter-spacing:0.312px;">Groundwater Table Below Datum</div>
<div style="position:absolute;left:938.4px;top:607.58px;width:92.17px;height:17.04px;box-sizing:border-box;border:1px solid #c4c4c4;border-radius:3px;background:#fff;"></div>
<div style="position:absolute;left:941px;top:611.43px;font-size:10px;line-height:11.49px;font-weight:400;color:#333;white-space:pre;">60</div>
<div style="position:absolute;left:1060px;top:607.58px;width:91.68px;height:18.25px;box-sizing:border-box;border:1px solid #c4c4c4;border-radius:3px;background:#fff;"></div>
<div style="position:absolute;left:1065.5px;top:611.86px;font-size:10px;line-height:11.49px;font-weight:400;color:#333;white-space:pre;">ft</div>
<svg style="position:absolute;left:1139.78px;top:613.81px" width="8.2" height="5.6"><polyline points="1,1 4.1,4.6 7.2,1" fill="none" stroke="#111" stroke-width="1.7" stroke-linejoin="miter"/></svg>
<div style="position:absolute;left:696.12px;top:631.5px;font-size:10px;line-height:11.49px;font-weight:400;color:#333;white-space:pre;letter-spacing:0.181px;">Shortest Radius of Curvature</div>
<div style="position:absolute;left:938.4px;top:630.12px;width:92.17px;height:17.04px;box-sizing:border-box;border:1px solid #c4c4c4;border-radius:3px;background:#fff;"></div>
<div style="position:absolute;left:941px;top:633.97px;font-size:10px;line-height:11.49px;font-weight:400;color:#333;white-space:pre;">1,000</div>
<div style="position:absolute;left:1060px;top:630.12px;width:91.68px;height:18.25px;box-sizing:border-box;border:1px solid #c4c4c4;border-radius:3px;background:#fff;"></div>
<div style="position:absolute;left:1065.5px;top:634.39px;font-size:10px;line-height:11.49px;font-weight:400;color:#333;white-space:pre;">ft</div>
<svg style="position:absolute;left:1139.78px;top:636.34px" width="8.2" height="5.6"><polyline points="1,1 4.1,4.6 7.2,1" fill="none" stroke="#111" stroke-width="1.7" stroke-linejoin="miter"/></svg>
</div>
<div style="position:absolute;left:5px;top:683px;width:1242px;height:1px;box-sizing:border-box;background:#000;"></div>
</body></html>
